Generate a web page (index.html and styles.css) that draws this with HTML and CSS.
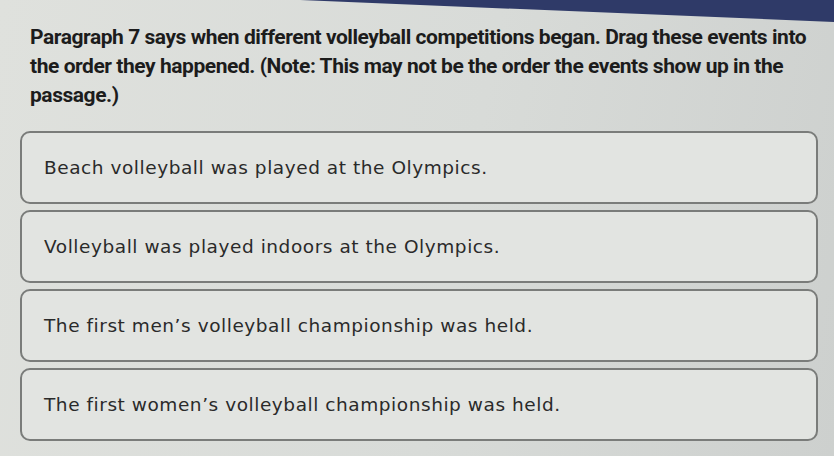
FILE: index.html
```html
<!DOCTYPE html>
<html lang="en">
<head>
  <meta charset="UTF-8" />
  <title>Volleyball order question</title>
  <link rel="stylesheet" href="styles.css">
</head>
<body>
  <div class="top-band"></div>

  <main class="question">
    <p class="prompt">
      Paragraph 7 says when different volleyball competitions began. Drag these events into<br>
      the order they happened. (Note: This may not be the order the events show up in the<br>
      passage.)
    </p>

    <ul class="answers">
      <li class="answer">Beach volleyball was played at the Olympics.</li>
      <li class="answer">Volleyball was played indoors at the Olympics.</li>
      <li class="answer">The first men’s volleyball championship was held.</li>
      <li class="answer">The first women’s volleyball championship was held.</li>
    </ul>
  </main>
</body>
</html>
```

FILE: styles.css
```css
* {
  margin: 0;
  padding: 0;
  box-sizing: border-box;
}

body {
  background: linear-gradient(100deg, #dfe1dd 0%, #d8dbd8 55%, #cdd0ce 100%);
  font-family: 'Roboto', sans-serif;
  color: #222;
  min-height: 100vh;
  overflow: hidden;
}

.top-band {
  height: 22px;
  background: #2f3a68;
  clip-path: polygon(36% 0, 100% 0, 100% 100%);
}

.question {
  padding: 0 16px 0 20px;
}

.prompt {
  padding: 1px 10px 0;
  font-size: 21px;
  font-weight: bold;
  line-height: 29px;
  letter-spacing: -0.45px;
  white-space: nowrap;
  color: #1c1c1c;
  margin-bottom: 21px;
}

.answers {
  list-style: none;
  display: flex;
  flex-direction: column;
  gap: 6px;
}

.answer {
  height: 73px;
  display: flex;
  align-items: center;
  padding: 0 22px;
  background: #e2e4e1;
  border: 2px solid #7a7c7a;
  border-radius: 10px;
  font-family: 'DejaVu Sans', sans-serif;
  font-size: 18.5px;
  letter-spacing: 0.55px;
  color: #2a2a2a;
}
```
